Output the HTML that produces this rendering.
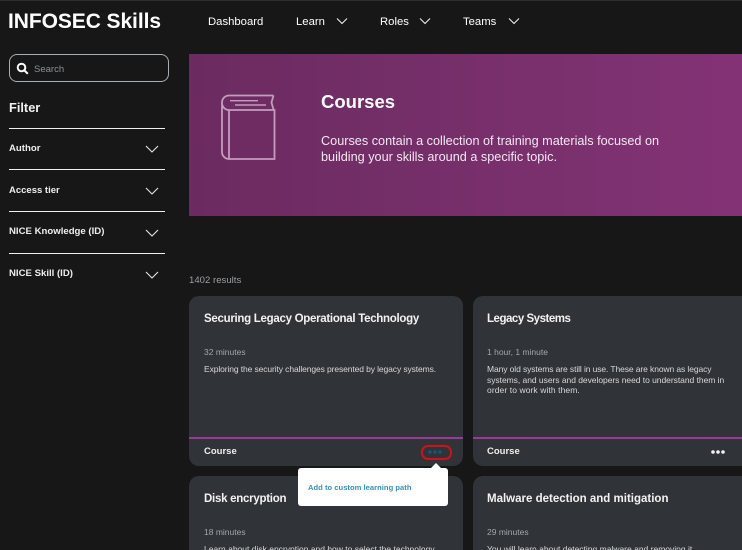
<!DOCTYPE html>
<html lang="en"><head><meta charset="utf-8"><title>Courses</title>
<style>
html,body{margin:0;padding:0;background:#171717;width:742px;height:550px;overflow:hidden}
body{position:relative;font-family:"Liberation Sans",sans-serif;color:#fff;border-top:0}
.t{position:absolute;white-space:nowrap;line-height:1}
.b{font-weight:700}
.abs{position:absolute}
.hr{position:absolute;left:9px;width:156px;height:1px;background:#f0f0f0}
.card{position:absolute;background:#303438;border-radius:10px}
.line{position:absolute;height:2px;background:#9a3a94}
svg{position:absolute;overflow:visible}
.d{font-size:8.5px;color:#d6d7d9}
.m{font-size:8.5px;color:#a3a6aa}
.h{font-size:11.5px;color:#f2f2f2}
.f{font-size:9.5px;color:#eee}
.n{font-size:11.3px}
</style></head><body>
<div class="abs" style="left:0;top:0;width:742px;height:1px;background:#2e2e2e"></div>

<div class="t b" style="left:8px;top:11px;font-size:21px;letter-spacing:-.08px">INFOSEC Skills</div>
<div class="t n" style="left:208px;top:17px">Dashboard</div>
<div class="t n" style="left:296px;top:17px">Learn</div>
<div class="t n" style="left:380px;top:17px">Roles</div>
<div class="t n" style="left:463px;top:17px">Teams</div>
<svg style="left:0;top:0" width="742" height="30" fill="none" stroke="#e8eef2" stroke-width="1.1"><path d="M337 18.500l5 5 5-5M420 18.500l5 5 5-5M509 18.500l5 5 5-5"/></svg>

<div class="abs" style="left:9px;top:54px;width:158px;height:26px;border:1px solid #a8adb2;border-radius:8px"></div>
<svg style="left:16px;top:62px" width="13" height="13" fill="none" stroke="#fff" stroke-width="2"><circle cx="5.5" cy="5.5" r="3.8"/><path d="M8.5 8.500l3.300 3.300"/></svg>
<div class="t" style="left:34px;top:64.500px;font-size:9.500px;color:#8b9096">Search</div>
<div class="t b" style="left:9px;top:101.500px;font-size:12.800px;color:#f2f2f2">Filter</div>

<div class="hr" style="top:128px"></div>
<div class="hr" style="top:169px"></div>
<div class="hr" style="top:211px"></div>
<div class="hr" style="top:253px"></div>
<div class="t b" style="left:9px;top:144px;font-size:9.600px;color:#eee">Author</div>
<div class="t b" style="left:9px;top:186px;font-size:9.500px;color:#eee">Access tier</div>
<div class="t b" style="left:9px;top:227px;font-size:9.600px;color:#eee">NICE Knowledge (ID)</div>
<div class="t b" style="left:9px;top:269px;font-size:9.600px;color:#eee">NICE Skill (ID)</div>
<svg style="left:0;top:0" width="180" height="290" fill="none" stroke="#e6e6e6" stroke-width="1.100"><path d="M146 146l6 6 6-6M146 188l6 6 6-6M146 230l6 6 6-6M146 272l6 6 6-6"/></svg>

<div class="abs" style="left:189px;top:54px;width:553px;height:162px;background:linear-gradient(90deg,#6b2b60,#833375)"></div>
<svg style="left:189px;top:70px" width="120" height="110" fill="none" stroke="#c49cbd" stroke-width="1.800"><path d="M84.500 25.500H40a7 7 0 0 0-7 7v49.500a7 7 0 0 0 6.500 7H85.500V40H40a7 7 0 0 1-7-7.500M40 40v49M84.500 25.500l-2 7 2 7"/><path d="M41 30.700h28M46 35h31" stroke-width="1.400"/></svg>
<div class="t b" style="left:321px;top:92.500px;font-size:18.500px">Courses</div>
<div class="t" style="left:321px;top:134.500px;font-size:12.680px;color:#f2e9f1">Courses contain a collection of training materials focused on</div>
<div class="t" style="left:321px;top:151px;font-size:12.680px;color:#f2e9f1">building your skills around a specific topic.</div>

<div class="t" style="left:189px;top:275.500px;font-size:9.600px;color:#9b9fa3">1402 results</div>

<div class="card" style="left:189px;top:296px;width:274px;height:170px"></div>
<div class="card" style="left:473px;top:296px;width:279px;height:170px"></div>
<div class="card" style="left:189px;top:476px;width:274px;height:90px"></div>
<div class="card" style="left:473px;top:476px;width:279px;height:90px"></div>
<div class="line" style="left:189px;top:437px;width:274px"></div>
<div class="line" style="left:473px;top:437px;width:269px"></div>

<div class="t b h" style="left:204px;top:314px;letter-spacing:-.29px">Securing Legacy Operational Technology</div>
<div class="t m" style="left:204px;top:347.500px">32 minutes</div>
<div class="t d" style="left:204px;top:364.500px;letter-spacing:-.106px">Exploring the security challenges presented by legacy systems.</div>
<div class="t b f" style="left:204px;top:446.500px">Course</div>

<div class="t b h" style="left:487px;top:314px;letter-spacing:-.48px">Legacy Systems</div>
<div class="t m" style="left:487px;top:347.500px">1 hour, 1 minute</div>
<div class="t d" style="left:487px;top:364.500px;letter-spacing:-.1px">Many old systems are still in use. These are known as legacy</div>
<div class="t d" style="left:487px;top:375.500px;letter-spacing:-.04px">systems, and users and developers need to understand them in</div>
<div class="t d" style="left:487px;top:386px;letter-spacing:.09px">order to work with them.</div>
<div class="t b f" style="left:487px;top:446.500px">Course</div>
<svg style="left:711px;top:449px" width="14" height="6" fill="#f2f2f2"><circle cx="2" cy="3" r="1.800"/><circle cx="7" cy="3" r="1.800"/><circle cx="12" cy="3" r="1.800"/></svg>

<div class="abs" style="left:421px;top:445px;width:27px;height:11px;border:2px solid #d30f18;border-radius:7px"></div>
<svg style="left:428px;top:449px" width="14" height="6" fill="#0b5a80"><circle cx="2" cy="3" r="1.800"/><circle cx="7" cy="3" r="1.800"/><circle cx="12" cy="3" r="1.800"/></svg>

<div class="t b h" style="left:204px;top:494px;letter-spacing:-.27px">Disk encryption</div>
<div class="t m" style="left:204px;top:527.500px">18 minutes</div>
<div class="t d" style="left:204px;top:544.500px">Learn about disk encryption and how to select the technology</div>
<div class="t b h" style="left:487px;top:494px">Malware detection and mitigation</div>
<div class="t m" style="left:487px;top:527.500px">29 minutes</div>
<div class="t d" style="left:487px;top:544.500px">You will learn about detecting malware and removing it</div>

<div class="abs" style="left:298px;top:468px;width:150px;height:38px;background:#fff;border-radius:3px"></div>
<svg style="left:429px;top:463px" width="14" height="6" fill="#fff"><path d="M1 6L7 0l6 6z"/></svg>
<div class="t b" style="left:308px;top:483.500px;font-size:7.600px;color:#3392bd;letter-spacing:.02px">Add to custom learning path</div>
</body></html>
